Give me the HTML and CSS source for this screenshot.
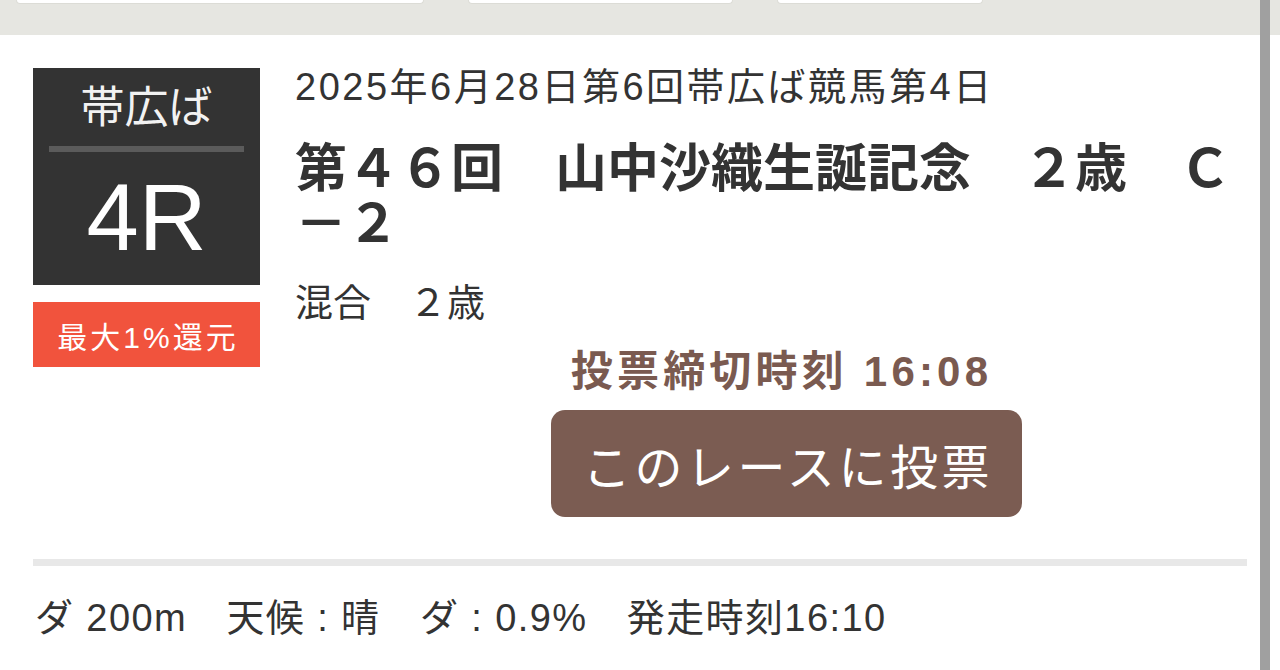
FILE: index.html
```html
<!DOCTYPE html>
<html lang="ja">
<head>
<meta charset="utf-8">
<title>帯広ば 4R</title>
<link rel="stylesheet" href="styles.css">
</head>
<body>
<div class="topbar">
  <div class="tab tab-1"></div>
  <div class="tab tab-2"></div>
  <div class="tab tab-3"></div>
</div>
<main class="race">
  <div class="race-row">
    <div class="race-left">
      <div class="venue-box">
        <div class="venue-name">帯広ば</div>
        <div class="venue-rule"></div>
        <div class="venue-num">4R</div>
      </div>
      <div class="cashback">最大1%還元</div>
    </div>
    <div class="race-right">
      <div class="race-date">2025年6月28日第6回帯広ば競馬第4日</div>
      <h1 class="race-title">第４６回　山中沙織生誕記念　２歳　Ｃ－２</h1>
      <div class="race-class">混合　２歳</div>
      <div class="vote">
        <div class="deadline">投票締切時刻 16:08</div>
        <a class="vote-btn">このレースに投票</a>
      </div>
    </div>
  </div>
  <div class="divider"></div>
  <div class="race-info">ダ 200m　天候 : 晴　ダ : 0.9%　発走時刻16:10</div>
</main>
<div class="scrollbar"></div>
</body>
</html>
```
FILE: styles.css
```css
html, body {
  margin: 0;
  padding: 0;
  background: #ffffff;
}
body {
  font-family: "Liberation Sans", "Noto Sans CJK JP", sans-serif;
  color: #333333;
  width: 1280px;
  height: 670px;
  overflow: hidden;
}
.topbar {
  height: 35px;
  background: #e6e6e1;
  display: flex;
  align-items: flex-start;
  padding-left: 16px;
  gap: 44px;
}
.tab {
  height: 3px;
  background: #ffffff;
  border: 1px solid #dcdcd6;
  border-top: none;
  border-radius: 0 0 6px 6px;
}
.tab-1 { width: 406px; }
.tab-2 { width: 263px; }
.tab-3 { width: 204px; }

.race {
  padding: 33px 33px 0 33px;
}
.race-row {
  display: flex;
  gap: 35px;
}
.race-left {
  width: 227px;
  flex: none;
  display: flex;
  flex-direction: column;
}
.venue-box {
  height: 217px;
  background: #333333;
  display: flex;
  flex-direction: column;
}
.venue-name {
  margin-top: 10px;
  height: 60px;
  line-height: 60px;
  font-size: 44px;
  color: #f2f2f2;
  text-align: center;
}
.venue-rule {
  margin: 8px 16px 0;
  height: 6px;
  background: #5b5b5b;
}
.venue-num {
  flex: 1;
  display: flex;
  align-items: center;
  justify-content: center;
  font-size: 94px;
  color: #ffffff;
  padding-bottom: 2px;
}
.cashback {
  margin-top: 17px;
  height: 65px;
  background: #f1533d;
  color: #ffffff;
  font-size: 30px;
  letter-spacing: 3px;
  padding-left: 3px;
  display: flex;
  align-items: center;
  justify-content: center;
}

.race-right {
  flex: 1;
  min-width: 0;
  display: flex;
  flex-direction: column;
}
.race-date {
  font-size: 38px;
  line-height: 38px;
  letter-spacing: 2.5px;
}
.race-title {
  margin: 31px 0 0;
  font-family: "Noto Sans CJK JP", sans-serif;
  font-size: 52px;
  line-height: 55px;
  font-weight: 700;
}
.race-class {
  margin-top: 34px;
  font-family: "Noto Sans CJK JP", sans-serif;
  font-size: 38px;
  line-height: 38px;
}
.vote {
  display: flex;
  flex-direction: column;
  align-items: center;
  padding-left: 31px;
}
.deadline {
  margin-top: 30px;
  margin-right: 10px;
  font-size: 42px;
  line-height: 46px;
  font-weight: 700;
  color: #7a5a50;
  letter-spacing: 4.2px;
}
.vote-btn {
  margin-top: 15px;
  width: 471px;
  height: 107px;
  border-radius: 14px;
  background: #7b5c52;
  color: #ffffff;
  font-family: "Noto Sans CJK JP", sans-serif;
  font-size: 48px;
  letter-spacing: 3.6px;
  padding-left: 3px;
  box-sizing: border-box;
  display: flex;
  align-items: center;
  justify-content: center;
}
.divider {
  margin-top: 42px;
  height: 7px;
  background: #e8e8e8;
}
.race-info {
  margin-top: 32px;
  padding-left: 2px;
  font-size: 38px;
  line-height: 40px;
  letter-spacing: 1.4px;
}
.scrollbar {
  position: fixed;
  top: 0;
  left: 1260px;
  width: 10px;
  height: 670px;
  background: #a0a0a0;
}
```
